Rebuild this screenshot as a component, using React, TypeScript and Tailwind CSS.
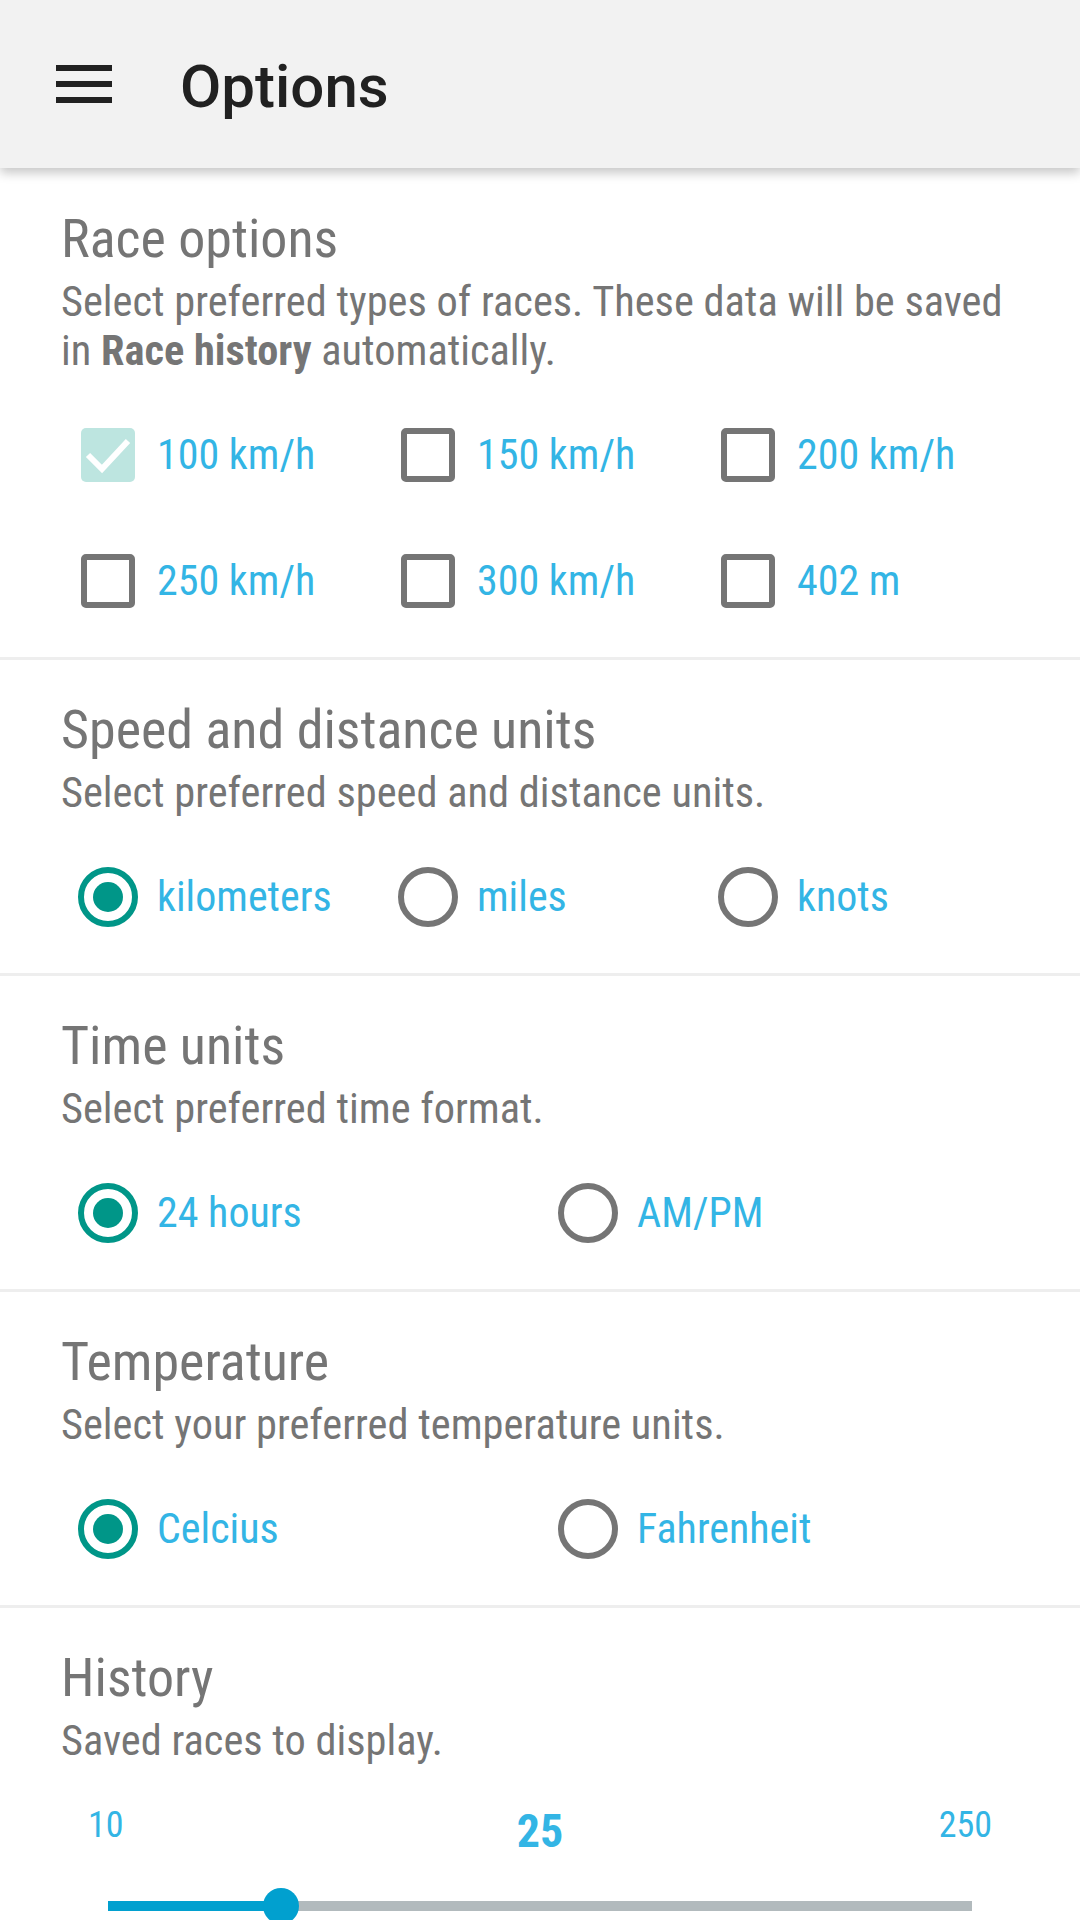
const font = "[font-family:'Roboto_Condensed','Liberation_Sans_Narrow',Roboto,sans-serif]";

const CheckBox = ({ checked }: { checked?: boolean }) =>
  checked ? (
    <div className="h-[54px] w-[54px] rounded-[5px] bg-[#bde5e0]">
      <svg viewBox="0 0 54 54" className="h-[54px] w-[54px]">
        <path d="M7 27 L21 41 L47 13" stroke="#ffffff" strokeWidth="6" fill="none" />
      </svg>
    </div>
  ) : (
    <div className="h-[54px] w-[54px] rounded-[5px] border-[6px] border-[#757575]" />
  );

const Radio = ({ checked }: { checked?: boolean }) =>
  checked ? (
    <div className="flex h-[60px] w-[60px] items-center justify-center rounded-full border-[6px] border-[#009688]">
      <div className="h-[30px] w-[30px] rounded-full bg-[#009688]" />
    </div>
  ) : (
    <div className="h-[60px] w-[60px] rounded-full border-[6px] border-[#757575]" />
  );

const CheckItem = ({ label, checked }: { label: string; checked?: boolean }) => (
  <div className="flex h-[126px] items-center">
    <div className="ml-[21px] w-[76px]">
      <CheckBox checked={checked} />
    </div>
    <span className="text-[42px] leading-[50px] text-[#33b5e5]">{label}</span>
  </div>
);

const RadioItem = ({ label, checked }: { label: string; checked?: boolean }) => (
  <div className="flex h-[126px] items-center">
    <div className="ml-[18px] w-[79px]">
      <Radio checked={checked} />
    </div>
    <span className="text-[42px] leading-[50px] text-[#33b5e5]">{label}</span>
  </div>
);

const Section = ({
  title,
  desc,
  first,
  children,
}: {
  title: string;
  desc: React.ReactNode;
  first?: boolean;
  children: React.ReactNode;
}) => (
  <section className={first ? "pt-[39px] pb-[13px]" : "pt-[38px] pb-[13px]"}>
    <h2 className="pl-[61px] text-[54px] leading-[63px] text-[#757575]">{title}</h2>
    <p className="mt-[7px] pl-[61px] text-[42.4px] leading-[49px] text-[#757575]">{desc}</p>
    <div className="mt-[17px] px-[60px]">{children}</div>
  </section>
);

const Divider = () => <div className="h-[3px] bg-[#eeeeee]" />;

export default function App() {
  return (
    <div className={`h-[1920px] w-[1080px] overflow-hidden bg-white ${font}`}>
      <header className="relative z-10 flex h-[168px] items-center bg-[#f2f2f2] shadow-[0_5px_10px_rgba(0,0,0,0.22)]">
        <div className="ml-[56px] flex w-[56px] flex-col gap-[10px]">
          <div className="h-[6px] bg-[#212121]" />
          <div className="h-[6px] bg-[#212121]" />
          <div className="h-[6px] bg-[#212121]" />
        </div>
        <h1 className="ml-[68px] mt-[5px] text-[60px] leading-[72px] font-medium text-[#212121] [font-family:Roboto,sans-serif]">
          Options
        </h1>
      </header>

      <Section
        first
        title="Race options"
        desc={
          <>
            Select preferred types of races. These data will be saved
            <br />
            in <b className="font-bold">Race history</b> automatically.
          </>
        }
      >
        <div className="grid grid-cols-3">
          <CheckItem label="100 km/h" checked />
          <CheckItem label="150 km/h" />
          <CheckItem label="200 km/h" />
          <CheckItem label="250 km/h" />
          <CheckItem label="300 km/h" />
          <CheckItem label="402 m" />
        </div>
      </Section>
      <Divider />

      <Section title="Speed and distance units" desc="Select preferred speed and distance units.">
        <div className="grid grid-cols-3">
          <RadioItem label="kilometers" checked />
          <RadioItem label="miles" />
          <RadioItem label="knots" />
        </div>
      </Section>
      <Divider />

      <Section title="Time units" desc="Select preferred time format.">
        <div className="grid grid-cols-2">
          <RadioItem label="24 hours" checked />
          <RadioItem label="AM/PM" />
        </div>
      </Section>
      <Divider />

      <Section title="Temperature" desc="Select your preferred temperature units.">
        <div className="grid grid-cols-2">
          <RadioItem label="Celcius" checked />
          <RadioItem label="Fahrenheit" />
        </div>
      </Section>
      <Divider />

      <section className="pt-[38px]">
        <h2 className="pl-[61px] text-[54px] leading-[63px] text-[#757575]">History</h2>
        <p className="mt-[7px] pl-[61px] text-[42.4px] leading-[49px] text-[#757575]">Saved races to display.</p>
        <div className="mx-[88px] mt-[39px] grid h-[54px] grid-cols-3 items-start text-[#33b5e5]">
          <span className="text-left text-[36px] leading-[42px]">10</span>
          <span className="text-center text-[46px] leading-[54px] font-bold">25</span>
          <span className="text-right text-[36px] leading-[42px]">250</span>
        </div>
        <div className="relative mx-[108px] mt-[30px] h-[36px]">
          <div className="absolute left-0 right-0 top-[13px] flex h-[10px]">
            <div className="w-[173px] bg-[#01a0cf]" />
            <div className="flex-1 bg-[#b2babd]" />
          </div>
          <div className="absolute left-[155px] top-0 h-[36px] w-[36px] rounded-full bg-[#01a0cf]" />
        </div>
      </section>
    </div>
  );
}
